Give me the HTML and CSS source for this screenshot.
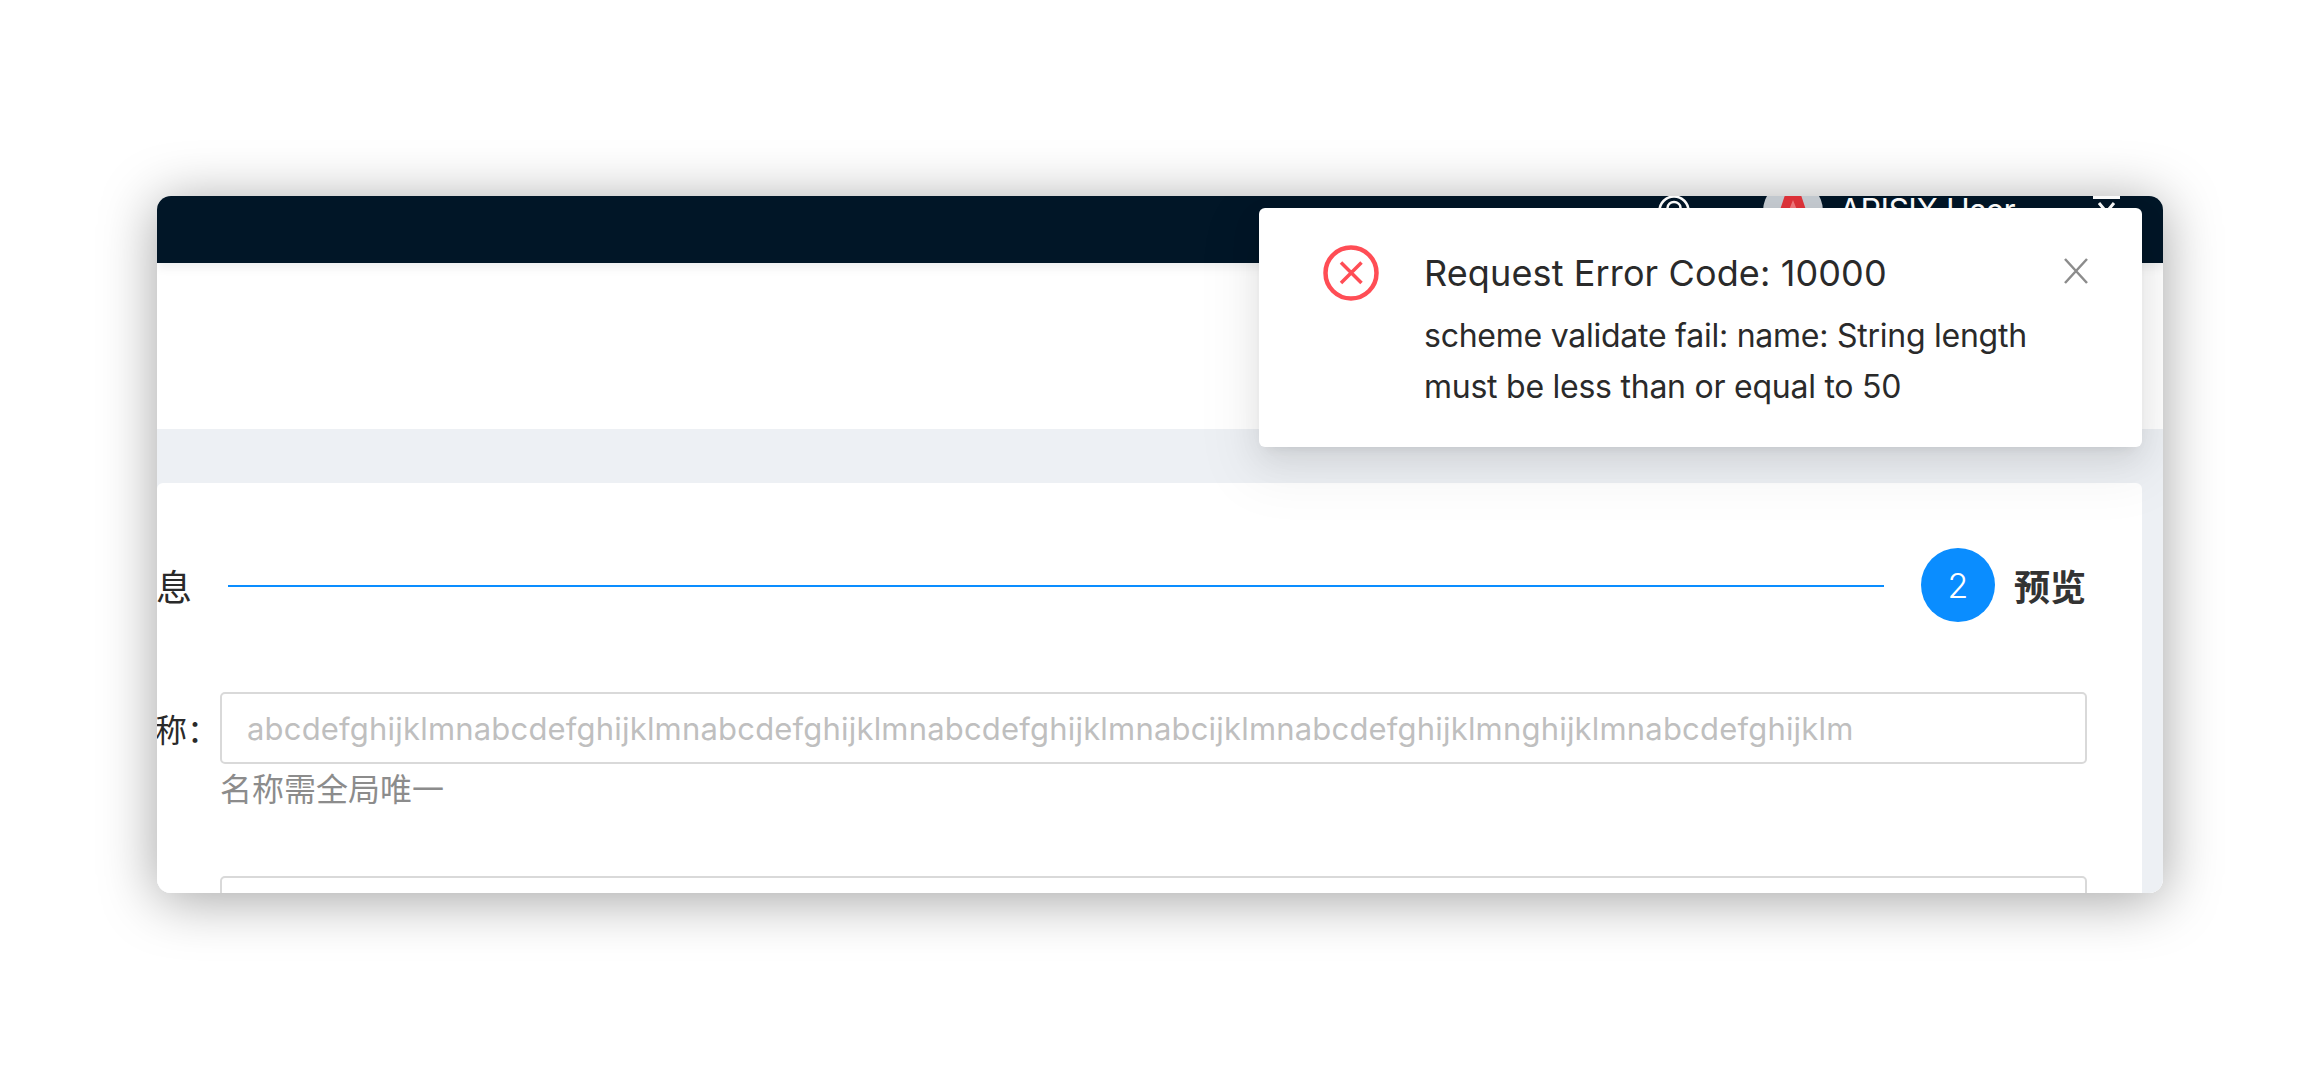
FILE: index.html
```html
<!DOCTYPE html>
<html lang="zh">
<head>
<meta charset="utf-8">
<title>APISIX</title>
<link rel="stylesheet" href="styles.css">
</head>
<body>
<div class="window">
  <div class="scroll">
    <header class="topbar">
      <svg class="help" viewBox="0 0 32 32" aria-hidden="true"><circle cx="16" cy="16" r="14.5"/><path d="M9.500 13c0-3.500 3-6 6.500-6s6.500 2.500 6.500 5.500c0 5-6.500 4.500-6.500 9"/><circle class="dot" cx="16" cy="25.500" r="1.500"/></svg>
      <span class="avatar"><svg viewBox="0 0 60 60" aria-hidden="true"><path class="logo" d="M24 8H36L50 50H40L30 26 20 50H10Z"/><path class="logo-hi" d="M30 19 34 29H26Z"/></svg></span>
      <span class="user">APISIX User</span>
      <svg class="lang" viewBox="0 0 32 34" aria-hidden="true"><path d="M1 2.500H28M7 8 22 26M22 8 7 26M28 14l3 6"/></svg>
    </header>
    <div class="pagehead"></div>
    <main class="content">
      <section class="card">
        <div class="steps">
          <span class="step-title">基本信息</span>
          <span class="step-line"></span>
          <span class="step-num">2</span>
          <span class="step-current">预览</span>
        </div>
        <div class="row">
          <label class="row-label">名称：</label>
          <input class="field" placeholder="abcdefghijklmnabcdefghijklmnabcdefghijklmnabcdefghijklmnabcijklmnabcdefghijklmnghijklmnabcdefghijklm">
        </div>
        <div class="row">
          <span class="hint">名称需全局唯一</span>
        </div>
        <div class="row row-next">
          <input class="field">
        </div>
      </section>
    </main>
  </div>
  <aside class="notice">
    <svg class="notice-icon" viewBox="0 0 56 56" aria-hidden="true"><circle cx="28" cy="28" r="25.500"/><path class="cross" d="M18 17.500 38.500 38M38.500 17.500 18 38"/></svg>
    <div class="notice-body">
      <div class="notice-title">Request Error Code: 10000</div>
      <div class="notice-desc">scheme validate fail: name: String length must be less than or equal to 50</div>
    </div>
    <svg class="notice-close" viewBox="0 0 24 26" aria-hidden="true"><path d="M1 1 23 25M23 1 1 25"/></svg>
  </aside>
</div>
</body>
</html>
```
FILE: styles.css
```css
* { box-sizing: border-box; }
html, body { margin: 0; height: 100%; background: #fff; }
body {
  padding: 196px 0 0 157px;
  font-family: Inter, "Noto Sans CJK SC", sans-serif;
  color: #2a2a2a;
  overflow: hidden;
}
.window {
  position: relative;
  width: 2006px;
  height: 697px;
  border-radius: 14px;
  overflow: hidden;
  background: #fff;
}
body::before {
  content: "";
  position: absolute;
  left: 157px;
  top: 196px;
  width: 2006px;
  height: 697px;
  border-radius: 14px;
  box-shadow: 0 6px 56px rgba(0,0,0,.37);
}
.scroll { margin-top: -37px; }
.topbar {
  height: 104px;
  background: #011627;
  color: #fff;
  display: flex;
  align-items: center;
  justify-content: flex-end;
  padding-right: 39px;
  position: relative;
  box-shadow: 0 4px 10px rgba(0,21,41,.08);
}
.help { width: 32px; height: 32px; margin-right: 73px; }
.help circle, .help path { fill: none; stroke: #fff; stroke-width: 2.5; }
.help .dot { fill: #fff; stroke: none; }
.avatar {
  width: 60px;
  height: 60px;
  border-radius: 50%;
  background: #c7cdd3;
  margin-right: 16px;
  flex: none;
}
.avatar svg { display: block; width: 60px; height: 60px; }
.logo { fill: #e1333a; }
.logo-hi { fill: #f2787c; }
.user {
  font-size: 32px;
  line-height: 44px;
  letter-spacing: -.6px;
  margin-right: 77px;
  white-space: nowrap;
}
.lang { width: 32px; height: 34px; margin-bottom: -2px; }
.lang path { fill: none; stroke: #fff; stroke-width: 3; }
.pagehead { height: 166px; background: #fff; }
.content {
  background: #edf0f4;
  padding: 54px 21px 0 0;
  height: 500px;
}
.card {
  height: 446px;
  background: #fff;
  border-radius: 6px 6px 0 0;
  overflow: hidden;
  padding: 65px 55px 0 0;
}
.steps {
  display: flex;
  align-items: center;
  justify-content: flex-end;
  height: 74px;
  margin-right: 1px;
  margin-bottom: 70px;
}
.step-title { font-size: 36px; flex: none; white-space: nowrap; margin-right: 36px; }
.step-line { width: 1656px; height: 2px; background: #0a8dff; flex: none; margin-right: 37px; margin-top: 2px; }
.step-num {
  width: 74px;
  height: 74px;
  border-radius: 50%;
  background: #0a8dff;
  color: #fff;
  font-size: 34px;
  font-weight: 300;
  display: flex;
  align-items: center;
  justify-content: center;
  flex: none;
  margin-right: 19px;
}
.step-current { font-size: 36px; font-weight: 600; flex: none; color: #333; }
.row {
  display: flex;
  align-items: center;
  justify-content: flex-end;
}
.row-label { font-size: 32px; flex: none; white-space: nowrap; margin-right: 1px; }
.field {
  width: 1867px;
  height: 72px;
  flex: none;
  border: 2px solid #d9d9d9;
  border-radius: 5px;
  padding: 0 25px;
  font: inherit;
  font-size: 31px;
  letter-spacing: .19px;
  background: #fff;
  outline: none;
}
.field::placeholder { color: #bfbfbf; opacity: 1; }
.hint {
  width: 1867px;
  flex: none;
  font-size: 32px;
  line-height: 52px;
  color: #8c8c8c;
}
.row-next { margin-top: 60px; }
.notice {
  position: absolute;
  top: 12px;
  right: 21px;
  width: 883px;
  height: 239px;
  background: #fff;
  border-radius: 6px;
  display: flex;
  gap: 45px;
  padding: 37px 64px 0;
  box-shadow: 0 6px 12px -8px rgba(0,0,0,.12), 0 12px 32px rgba(0,0,0,.08), 0 18px 56px 16px rgba(0,0,0,.05);
}
.notice-icon { width: 56px; height: 56px; flex: none; }
.notice-icon circle { fill: none; stroke: #ff4d55; stroke-width: 4.500; }
.notice-icon .cross { fill: none; stroke: #ff4d55; stroke-width: 3.500; }
.notice-body { width: 640px; }
.notice-title { font-size: 36px; line-height: 56px; letter-spacing: .12px; margin-bottom: 9px; }
.notice-desc { font-size: 32px; line-height: 51px; letter-spacing: -.25px; }
.notice-close { position: absolute; right: 54px; top: 50px; width: 24px; height: 26px; }
.notice-close path { fill: none; stroke: #8c8c8c; stroke-width: 2.500; }
```
